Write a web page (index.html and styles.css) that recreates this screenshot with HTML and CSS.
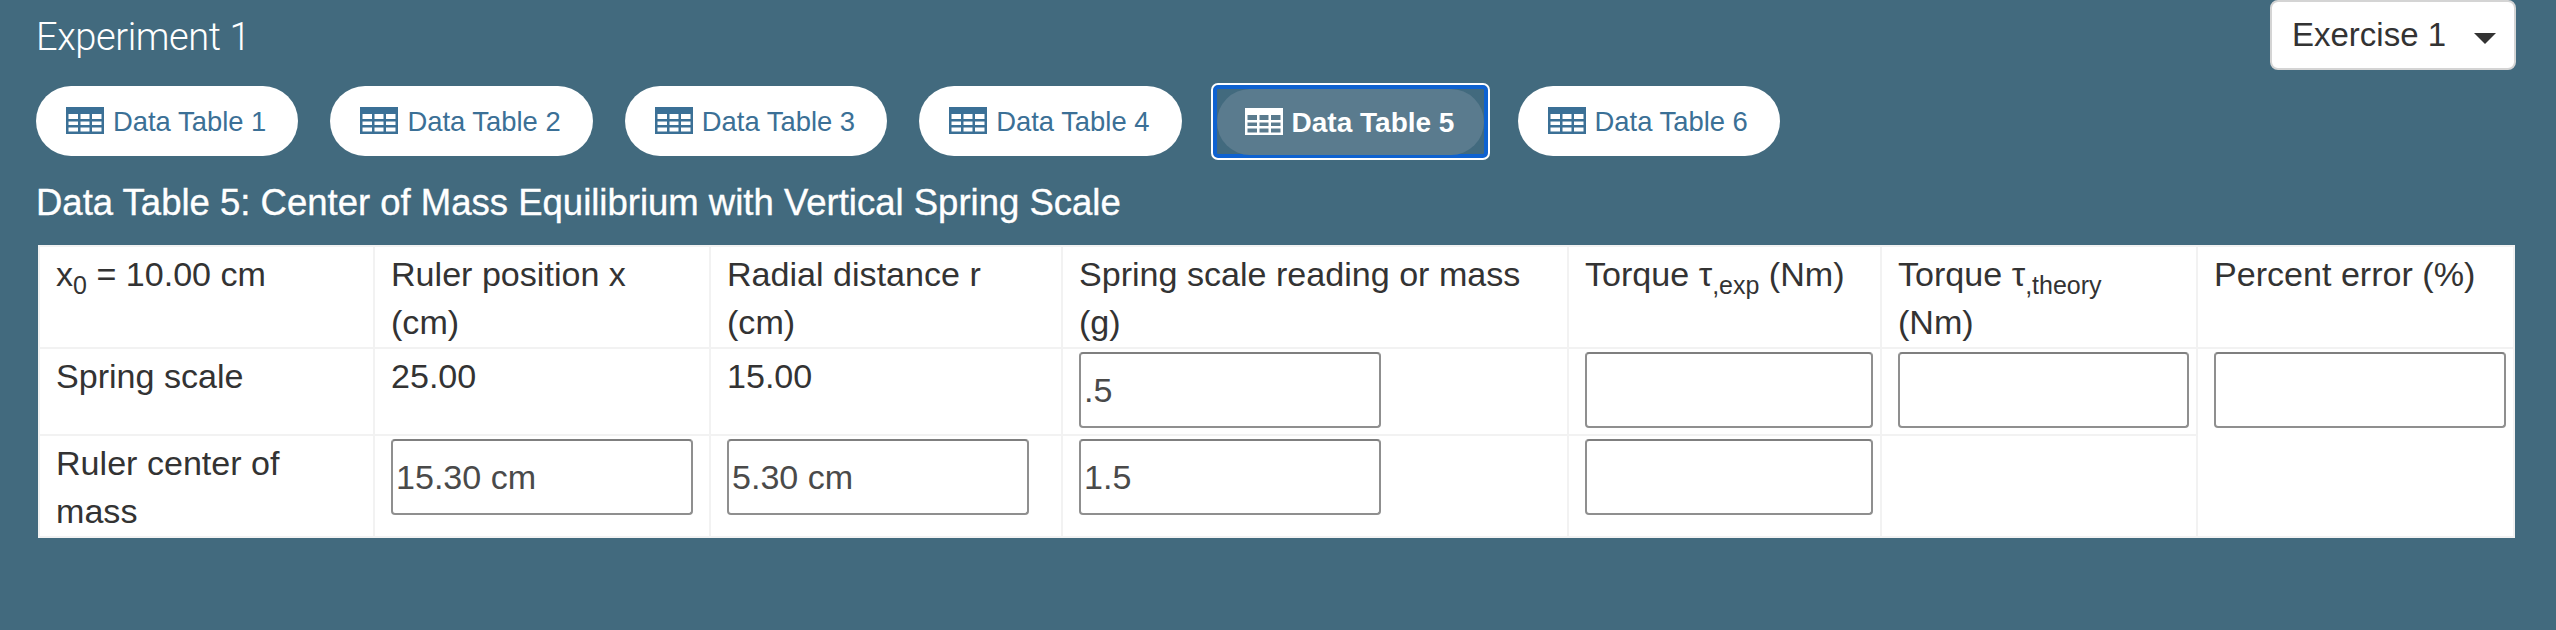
FILE: index.html
```html
<!DOCTYPE html>
<html lang="en">
<head>
<meta charset="utf-8">
<title>Experiment 1</title>
<link rel="stylesheet" href="styles.css">
</head>
<body>
<svg class="defs" width="0" height="0" aria-hidden="true">
  <symbol id="tbl" viewBox="0 0 38 27">
    <path fill="currentColor" fill-rule="evenodd" d="M0 0h38v27H0zM2.500 7v5h9.500V7zm12 0v5h9V7zm11.500 0v5h9.500V7zM2.500 14.500v3.500h9.500v-3.500zm12 0v3.500h9v-3.500zm11.500 0v3.500h9.500v-3.500zM2.500 20.500v4h9.500v-4zm12 0v4h9v-4zm11.500 0v4h9.500v-4z"/>
  </symbol>
</svg>
<header class="top">
  <h1 class="title">Experiment 1</h1>
  <button class="select" type="button"><span>Exercise 1</span><i class="caret"></i></button>
</header>
<nav class="tabs">
  <a class="pill"><svg class="ico"><use href="#tbl"/></svg>Data Table 1</a>
  <a class="pill"><svg class="ico"><use href="#tbl"/></svg>Data Table 2</a>
  <a class="pill"><svg class="ico"><use href="#tbl"/></svg>Data Table 3</a>
  <a class="pill"><svg class="ico"><use href="#tbl"/></svg>Data Table 4</a>
  <span class="ring"><a class="pill active"><svg class="ico"><use href="#tbl"/></svg>Data Table 5</a></span>
  <a class="pill"><svg class="ico"><use href="#tbl"/></svg>Data Table 6</a>
</nav>
<h2 class="heading">Data Table 5: Center of Mass Equilibrium with Vertical Spring Scale</h2>
<table class="data">
  <colgroup>
    <col class="c1"><col class="c2"><col class="c3"><col class="c4"><col class="c5"><col class="c6"><col class="c7">
  </colgroup>
  <tr class="r1">
    <td>x<sub>0</sub> = 10.00 cm</td>
    <td>Ruler position x<br>(cm)</td>
    <td>Radial distance r<br>(cm)</td>
    <td>Spring scale reading or mass<br>(g)</td>
    <td>Torque τ<sub>,exp</sub> (Nm)</td>
    <td>Torque τ<sub>,theory</sub><br>(Nm)</td>
    <td>Percent error (%)</td>
  </tr>
  <tr class="r2">
    <td>Spring scale</td>
    <td>25.00</td>
    <td>15.00</td>
    <td><input type="text" value=".5"></td>
    <td><input type="text"></td>
    <td><input type="text"></td>
    <td rowspan="2"><input type="text"></td>
  </tr>
  <tr class="r3">
    <td>Ruler center of<br>mass</td>
    <td><input type="text" value="15.30 cm"></td>
    <td><input type="text" value="5.30 cm"></td>
    <td><input type="text" value="1.5"></td>
    <td><input type="text"></td>
    <td></td>
  </tr>
</table>
</body>
</html>
```
FILE: styles.css
```css
* { box-sizing: border-box; }
html, body { margin: 0; padding: 0; }
body {
  width: 2556px;
  height: 630px;
  overflow: hidden;
  background: #426a7e;
  font-family: "Liberation Sans", Arial, sans-serif;
  color: #333;
}
.defs { position: absolute; }
.top {
  display: flex;
  justify-content: space-between;
  align-items: flex-start;
  height: 70px;
  padding: 0 40px 0 36px;
}
.title {
  margin: 12px 0 0;
  font-family: Roboto, "Liberation Sans", sans-serif;
  font-size: 38px;
  line-height: 50px;
  font-weight: 300;
  color: #fff;
  letter-spacing: -0.4px;
}
.select {
  display: flex;
  align-items: center;
  justify-content: space-between;
  width: 246px;
  height: 70px;
  padding: 0 18px 0 20px;
  background: #fff;
  border: 2px solid #d4d4d4;
  border-radius: 8px;
  font: 400 33px "Liberation Sans", Arial, sans-serif;
  color: #333;
}
.caret {
  width: 0;
  height: 0;
  margin-top: 6px;
  border-left: 11.5px solid transparent;
  border-right: 11.5px solid transparent;
  border-top: 11.5px solid #333;
}
.tabs {
  display: flex;
  align-items: center;
  gap: 32px;
  margin: 16px 0 0 36px;
  height: 70px;
}
.pill {
  display: flex;
  align-items: center;
  gap: 9px;
  width: 262.4px;
  height: 70px;
  padding: 2px 0 0 30px;
  border-radius: 35px;
  background: #fff;
  color: #3b7096;
  font-size: 27.4px;
  white-space: nowrap;
}
.ico { width: 38px; height: 27px; flex: none; margin-top: -3px; }
.ring {
  display: block;
  margin: 0 -4px 0 -3px;
  padding: 4px 4px 3px;
  border: 2px solid #fff;
  border-radius: 7px;
  background: #426a7e;
  box-shadow: inset 0 0 0 4px #0f62d0;
}
.pill.active {
  width: 267px;
  height: 66px;
  padding-left: 28px;
  background: #5a7b8e;
  color: #fff;
  font-size: 28px;
  font-weight: 700;
}
.heading {
  margin: 24px 0 0 36px;
  font-size: 36.5px;
  line-height: 46px;
  font-weight: 400;
  color: #fff;
  -webkit-text-stroke: 0.35px #fff;
}
.data {
  margin: 19px 0 0 38px;
  width: 2475px;
  table-layout: fixed;
  border-collapse: collapse;
  background: #fff;
  font-size: 34.1px;
  line-height: 48px;
}
.c1 { width: 335px; }
.c2 { width: 336px; }
.c3 { width: 352px; }
.c4 { width: 506px; }
.c5 { width: 313px; }
.c6 { width: 316px; }
.c7 { width: 317px; }
.data td {
  padding: 3px 7px 1px 16px;
  vertical-align: top;
  border: 2px solid #f2f2f2;
}
.r1 { height: 102px; }
.r2 { height: 87px; }
.r3 { height: 102px; }
.data sub {
  font-size: 25px;
  line-height: 0;
}
.data input {
  display: block;
  width: 100%;
  max-width: 302px;
  height: 76px;
  padding: 0 3px;
  border: 2px solid #8f8f8f;
  border-top-color: #7f7f7f;
  border-radius: 4px;
  background: #fff;
  font: 400 34.1px "Liberation Sans", Arial, sans-serif;
  color: #4a4a4a;
}
```
